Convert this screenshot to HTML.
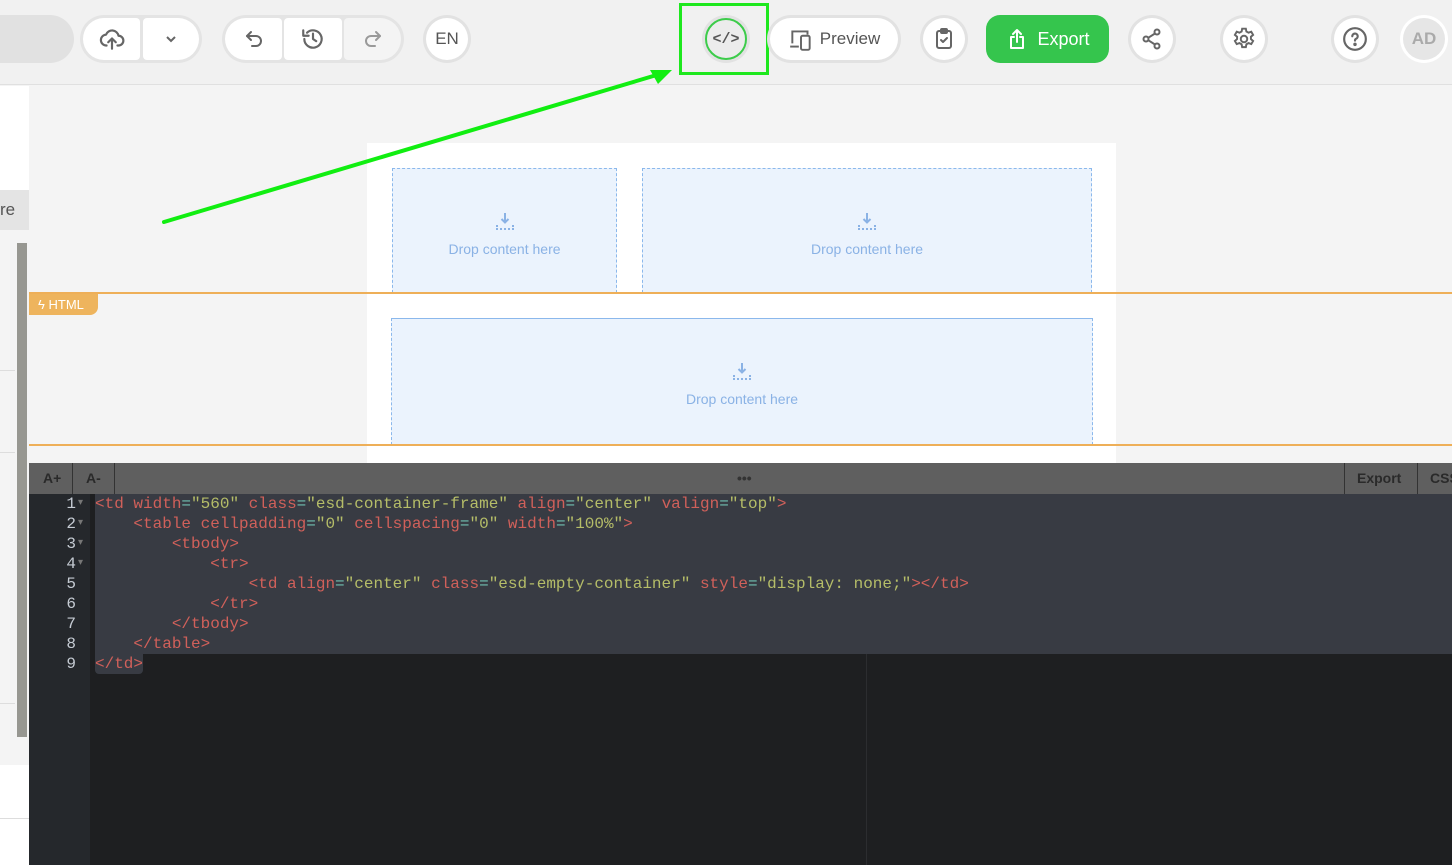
<!DOCTYPE html>
<html><head><meta charset="utf-8"><style>
*{box-sizing:border-box;margin:0;padding:0}
body{width:1452px;height:865px;overflow:hidden;background:#f4f4f4;font-family:"Liberation Sans",sans-serif;position:relative}
.a{position:absolute}
.tb{left:0;top:0;width:1452px;height:85px;background:#f1f1f1;border-bottom:1px solid #e0e0e0}
.grp{position:absolute;top:15px;height:48px;border-radius:24px;background:#e4e4e4;padding:3px}
.btn{position:absolute;background:#fff;display:flex;align-items:center;justify-content:center}
.rb{position:absolute;top:15px;height:48px;border-radius:24px;background:#e2e2e2;padding:3px}
.rb>div{width:100%;height:100%;border-radius:21px;background:#fff;display:flex;align-items:center;justify-content:center;color:#555;font-size:17px}
svg{display:block}
.drop{position:absolute;background:#ebf3fd;border:1px dashed #8bb8ec;color:#8ab2e5;font-size:14px;text-align:center}
.drop svg{margin:42px auto 0}
.drop div{margin-top:10px}
.code{font-family:"Liberation Mono",monospace;font-size:16px;line-height:20px;white-space:pre}
.t{color:#d0605a}.s{color:#b5bd68}.e{color:#70c0b1}
</style></head><body>
<div class="a tb"></div>
<div class="a" style="left:0;top:15px;width:74px;height:48px;background:#e1e1e1;border-radius:0 24px 24px 0"></div>
<div class="grp" style="left:80px;width:122px">
 <div class="btn" style="left:3px;top:3px;width:57px;height:42px;border-radius:21px 4px 4px 21px"><svg width="26" height="26" viewBox="0 0 24 24" fill="none" stroke="#666" stroke-width="2" stroke-linecap="round" stroke-linejoin="round"><path d="M7 18a5 5 0 0 1-.5-10A6 6 0 0 1 18 9a4.5 4.5 0 0 1 0 9h-1"/><path d="M12 21v-9M8.5 15l3.5-3.5 3.5 3.5"/></svg></div>
 <div class="btn" style="left:63px;top:3px;width:56px;height:42px;border-radius:4px 21px 21px 4px"><svg width="14" height="10" viewBox="0 0 14 10"><path d="M3 3l4 4 4-4" fill="none" stroke="#666" stroke-width="2"/></svg></div>
</div>
<div class="grp" style="left:222px;width:182px">
 <div class="btn" style="left:3px;top:3px;width:57px;height:42px;border-radius:21px 4px 4px 21px"><svg width="24" height="24" viewBox="0 0 24 24" fill="none" stroke="#666" stroke-width="2" stroke-linecap="round" stroke-linejoin="round"><path d="M9 5L5 9l4 4"/><path d="M5 9h9a5 5 0 0 1 0 10h-4"/></svg></div>
 <div class="btn" style="left:62px;top:3px;width:58px;height:42px;border-radius:4px"><svg width="26" height="26" viewBox="0 0 24 24" fill="none" stroke="#666" stroke-width="2" stroke-linecap="round" stroke-linejoin="round"><path d="M4 12a8 8 0 1 0 2.5-5.8"/><path d="M3 4v5h5"/><path d="M12 7v5l3 2"/></svg></div>
 <div class="btn" style="left:122px;top:3px;width:57px;height:42px;border-radius:4px 21px 21px 4px;background:#f4f4f4"><svg width="24" height="24" viewBox="0 0 24 24" fill="none" stroke="#999" stroke-width="2" stroke-linecap="round" stroke-linejoin="round"><path d="M15 5l4 4-4 4"/><path d="M19 9h-9a5 5 0 0 0 0 10h4"/></svg></div>
</div>
<div class="rb" style="left:423px;width:48px"><div>EN</div></div>
<div class="a" style="left:679px;top:3px;width:90px;height:72px;border:3px solid #1ee81e"></div>
<div class="rb" style="left:702px;width:48px;background:#e2e2e2"><div style="background:#ececec;border:2px solid #3ccc4a"><span style="font-size:15px;color:#555;font-family:'Liberation Mono',monospace;font-weight:bold">&lt;/&gt;</span></div></div>
<div class="rb" style="left:767px;width:134px"><div><svg width="26" height="26" viewBox="0 0 24 24" fill="none" stroke="#666" stroke-width="1.8"><path d="M4 16V5h14v3"/><path d="M2 19h8"/><rect x="12" y="9" width="8" height="13" rx="1.5"/></svg><span style="margin-left:6px">Preview</span></div></div>
<div class="rb" style="left:920px;width:48px"><div><svg width="24" height="24" viewBox="0 0 24 24" fill="none" stroke="#666" stroke-width="2" stroke-linecap="round" stroke-linejoin="round"><rect x="5" y="4" width="14" height="17" rx="2"/><rect x="9" y="2" width="6" height="4" rx="1"/><path d="M9 13l2 2 4-4"/></svg></div></div>
<div class="a" style="left:986px;top:15px;width:123px;height:48px;border-radius:14px;background:#35c54d;color:#fff;font-size:18px;display:flex;align-items:center;justify-content:center"><svg width="24" height="24" viewBox="0 0 24 24" fill="none" stroke="#fff" stroke-width="2" stroke-linecap="round" stroke-linejoin="round"><path d="M9 10H6v11h12V10h-3"/><path d="M12 15V3M8 7l4-4 4 4"/></svg><span style="margin-left:8px">Export</span></div>
<div class="rb" style="left:1128px;width:48px"><div><svg width="24" height="24" viewBox="0 0 24 24" fill="none" stroke="#666" stroke-width="2"><circle cx="17" cy="5" r="2.5"/><circle cx="6" cy="12" r="2.5"/><circle cx="17" cy="19" r="2.5"/><path d="M8.2 10.8l6.6-4.2M8.2 13.2l6.6 4.2"/></svg></div></div>
<div class="rb" style="left:1220px;width:48px"><div><svg width="26" height="26" viewBox="0 0 24 24" fill="none" stroke="#666" stroke-width="1.8"><circle cx="12" cy="12" r="3"/><path d="M10.3 2.5h3.4l.5 2.6 2 1.1 2.5-.9 1.7 2.9-2 1.7v2.2l2 1.7-1.7 2.9-2.5-.9-2 1.1-.5 2.6h-3.4l-.5-2.6-2-1.1-2.5.9-1.7-2.9 2-1.7v-2.2l-2-1.7 1.7-2.9 2.5.9 2-1.1z"/></svg></div></div>
<div class="rb" style="left:1331px;width:48px"><div><svg width="26" height="26" viewBox="0 0 24 24" fill="none" stroke="#666" stroke-width="2" stroke-linecap="round"><circle cx="12" cy="12" r="10"/><path d="M9.5 9.5a2.5 2.5 0 1 1 3.5 2.3c-.7.3-1 .9-1 1.7"/><circle cx="12" cy="17" r=".6" fill="#666"/></svg></div></div>
<div class="rb" style="left:1400px;width:48px;background:#fff"><div style="background:#e6e6e6;color:#aaa;font-weight:bold">AD</div></div>

<div class="a" style="left:0;top:86px;width:29px;height:779px;background:#fff"></div>
<div class="a" style="left:0;top:190px;width:29px;height:40px;background:#e4e4e4;color:#555;font-size:17px;line-height:40px">re</div>
<div class="a" style="left:0;top:230px;width:29px;height:535px;background:#f4f4f4"></div>
<div class="a" style="left:17px;top:243px;width:10px;height:494px;background:#979791"></div>
<div class="a" style="left:0;top:370px;width:15px;height:1px;background:#ddd"></div>
<div class="a" style="left:0;top:452px;width:15px;height:1px;background:#ddd"></div>
<div class="a" style="left:0;top:703px;width:15px;height:1px;background:#ddd"></div>
<div class="a" style="left:0;top:818px;width:29px;height:1px;background:#ddd"></div>

<div class="a" style="left:367px;top:143px;width:749px;height:320px;background:#fff"></div>
<div class="drop" style="left:392px;top:168px;width:225px;height:125px;border-bottom:none"><svg width="24" height="20" viewBox="0 0 24 20"><path d="M12 2v9M8.5 8l3.5 3.5L15.5 8" fill="none" stroke="#8ab2e5" stroke-width="2"/><path d="M3 18h18M4 14v4M20 14v4" stroke="#8ab2e5" stroke-width="2" stroke-dasharray="2 2"/></svg><div>Drop content here</div></div>
<div class="drop" style="left:642px;top:168px;width:450px;height:125px;border-bottom:none"><svg width="24" height="20" viewBox="0 0 24 20"><path d="M12 2v9M8.5 8l3.5 3.5L15.5 8" fill="none" stroke="#8ab2e5" stroke-width="2"/><path d="M3 18h18M4 14v4M20 14v4" stroke="#8ab2e5" stroke-width="2" stroke-dasharray="2 2"/></svg><div>Drop content here</div></div>
<div class="drop" style="left:391px;top:318px;width:702px;height:127px;border-style:solid dashed"><svg width="24" height="20" viewBox="0 0 24 20"><path d="M12 2v9M8.5 8l3.5 3.5L15.5 8" fill="none" stroke="#8ab2e5" stroke-width="2"/><path d="M3 18h18M4 14v4M20 14v4" stroke="#8ab2e5" stroke-width="2" stroke-dasharray="2 2"/></svg><div>Drop content here</div></div>
<div class="a" style="left:29px;top:292px;width:1423px;height:2px;background:#eeaf58"></div>
<div class="a" style="left:29px;top:444px;width:1423px;height:2px;background:#eeaf58"></div>
<div class="a" style="left:29px;top:294px;width:69px;height:21px;background:#eeb45d;border-radius:0 0 8px 0;color:#fff;font-size:13px;line-height:21px;padding-left:9px">ϟ HTML</div>
<svg class="a" style="left:0;top:0" width="1452" height="300"><path d="M164 222L660 74" stroke="#11ee11" stroke-width="4" stroke-linecap="round"/><path d="M672 70l-22 0 8 14z" fill="#11ee11"/></svg>

<div class="a" style="left:29px;top:463px;width:1423px;height:31px;background:#5f5f5f;color:#2a2a2a;font-size:14px;font-weight:bold;line-height:31px">
 <span class="a" style="left:14px">A+</span><span class="a" style="left:43px;top:0;width:1px;height:31px;background:#333"></span>
 <span class="a" style="left:57px">A-</span><span class="a" style="left:85px;top:0;width:1px;height:31px;background:#333"></span>
 <span class="a" style="left:708px;color:#333">•••</span>
 <span class="a" style="left:1315px;top:0;width:1px;height:31px;background:#333"></span><span class="a" style="left:1328px">Export</span>
 <span class="a" style="left:1388px;top:0;width:1px;height:31px;background:#333"></span><span class="a" style="left:1401px">CSS</span>
</div>
<div class="a" style="left:29px;top:494px;width:61px;height:371px;background:#25282c"></div>
<div class="a" style="left:90px;top:494px;width:1362px;height:371px;background:#1e1f21"></div>
<div class="a" style="left:866px;top:654px;width:1px;height:211px;background:#2c2d30"></div>
<div class="a" style="left:95px;top:494px;width:1357px;height:160px;background:#383b43"></div>
<div class="a" style="left:95px;top:654px;width:48px;height:20px;background:#383b43;border-radius:0 0 4px 4px"></div>
<div class="a code" style="left:29px;top:494px;width:47px;text-align:right;color:#c5cbd3">1
2
3
4
5
6
7
8
9</div>
<div class="a code" style="left:78px;top:494px;color:#777;font-size:10px;line-height:20px">▾
▾
▾
▾</div>
<div class="a code" style="left:95px;top:494px"><span class="t">&lt;td width</span><span class="e">=</span><span class="s">"560"</span> <span class="t">class</span><span class="e">=</span><span class="s">"esd-container-frame"</span> <span class="t">align</span><span class="e">=</span><span class="s">"center"</span> <span class="t">valign</span><span class="e">=</span><span class="s">"top"</span><span class="t">&gt;</span>
    <span class="t">&lt;table cellpadding</span><span class="e">=</span><span class="s">"0"</span> <span class="t">cellspacing</span><span class="e">=</span><span class="s">"0"</span> <span class="t">width</span><span class="e">=</span><span class="s">"100%"</span><span class="t">&gt;</span>
        <span class="t">&lt;tbody&gt;</span>
            <span class="t">&lt;tr&gt;</span>
                <span class="t">&lt;td align</span><span class="e">=</span><span class="s">"center"</span> <span class="t">class</span><span class="e">=</span><span class="s">"esd-empty-container"</span> <span class="t">style</span><span class="e">=</span><span class="s">"display: none;"</span><span class="t">&gt;&lt;/td&gt;</span>
            <span class="t">&lt;/tr&gt;</span>
        <span class="t">&lt;/tbody&gt;</span>
    <span class="t">&lt;/table&gt;</span>
<span class="t">&lt;/td&gt;</span></div>
</body></html>
